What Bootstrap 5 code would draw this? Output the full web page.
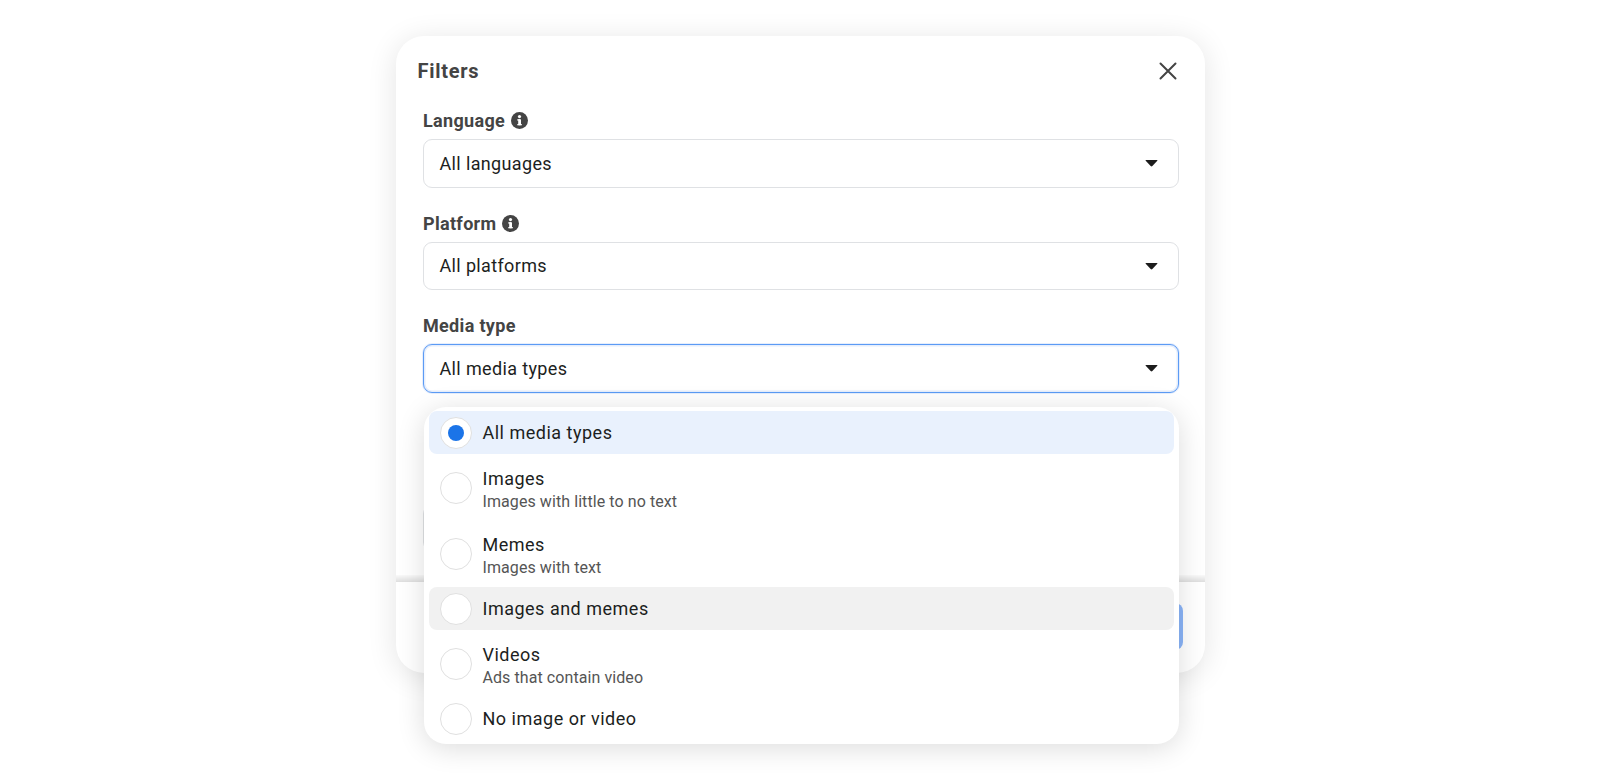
<!DOCTYPE html>
<html lang="en">
<head>
<meta charset="utf-8">
<title>Filters</title>
<link rel="stylesheet" href="https://cdn.jsdelivr.net/npm/bootstrap@5.3.0/dist/css/bootstrap.min.css">
<style>
body{background:#fff;font-family:Roboto,"Liberation Sans",sans-serif;color:#1c1e21;height:780px;overflow:hidden}
.flt-stage{padding-top:36px}
.flt-modal{width:809px;height:637px;background:#fff;border-radius:28px;box-shadow:0 4px 30px rgba(0,0,0,.11);position:relative}
.flt-head{height:70px;padding:0 26px 0 22px}
.flt-title{font-size:20px;font-weight:700;color:#444;margin:0;letter-spacing:.7px}
.flt-close{width:22px;height:22px;background:none;border:0;padding:0;line-height:0;color:#444}
.flt-body{padding:0 26px 0 27.5px;height:469px;overflow:hidden}
.flt-group{height:102.5px}
.flt-label{font-size:18px;font-weight:700;color:#444;height:33px;margin:0;line-height:29.5px;letter-spacing:.32px}
.flt-info{margin-left:6px;vertical-align:-2px}
.flt-select{height:48.5px;border:1px solid #dfe1e4;border-radius:9px;padding:0 20px 0 15.5px;font-size:18px;letter-spacing:.36px;color:#1c1e21;background:#fff}
.flt-select.flt-focus{border:1.5px solid #5b9bf5;box-shadow:inset 0 0 0 1.5px #e6eefc,0 0 0 1px #e6eefc}
.flt-hidden-field{height:46px;margin-top:91.5px}
.flt-band{height:7px;background:linear-gradient(#fafafa,#dedede)}
.flt-foot{height:47px;margin-top:21px;padding-right:22px}
.flt-apply{width:110px;height:47px;background:#8ab4f8;border:0;border-radius:8px}
.flt-menu{position:absolute;left:28px;top:371px;width:755px;height:337px;background:#fff;border-radius:22px;padding:4px 5px;box-shadow:0 4px 28px rgba(0,0,0,.14);gap:1px}
.flt-opt{padding:0 12px 0 11px;border-radius:8px;gap:11px;font-size:18px;letter-spacing:.5px;line-height:24px;color:#1c1e21}
.flt-one{height:43px}
.flt-two{height:65px}
.flt-sel{background:#e9f1fd}
.flt-hov{background:#f1f1f1}
.flt-radio{width:32px;height:32px;border-radius:50%;background:#fff;border:1px solid #e0e0e0;flex:none}
.flt-dot{width:16px;height:16px;border-radius:50%;background:#1b74e8}
.flt-sub{font-size:16px;letter-spacing:.08px;color:#555;line-height:22.500px}
.flt-tt{margin-top:5px}
</style>
</head>
<body>
<div class="flt-stage">
<div class="flt-modal mx-auto">
  <div class="flt-head d-flex align-items-center justify-content-between">
    <h5 class="flt-title">Filters</h5>
    <button class="flt-close" type="button" aria-label="Close"><svg width="22" height="22" viewBox="0 0 22 22"><path d="M3.500 3.500l15 15M18.500 3.500l-15 15" stroke="currentColor" stroke-width="2" stroke-linecap="round" fill="none"/></svg></button>
  </div>
  <div class="flt-body">
    <div class="flt-group">
      <div class="flt-label">Language<svg class="flt-info" width="17" height="17" viewBox="0 0 17 17"><circle cx="8.500" cy="8.500" r="8.500" fill="#444"/><rect x="7.200" y="7.200" width="2.800" height="6" rx=".6" fill="#fff"/><rect x="6.300" y="7.200" width="3" height="1.400" fill="#fff"/><rect x="6.300" y="12" width="4.500" height="1.300" fill="#fff"/><circle cx="8.500" cy="4.600" r="1.600" fill="#fff"/></svg></div>
      <div class="flt-select d-flex align-items-center justify-content-between"><span>All languages</span><svg width="13" height="8" viewBox="0 0 14 9"><path d="M1 1.200h12c.6 0 .8.5.5.9L8 8c-.6.6-1.400.6-2 0L.5 2.100C.2 1.700.4 1.200 1 1.200z" fill="#1c1c1c"/></svg></div>
    </div>
    <div class="flt-group">
      <div class="flt-label">Platform<svg class="flt-info" width="17" height="17" viewBox="0 0 17 17"><circle cx="8.500" cy="8.500" r="8.500" fill="#444"/><rect x="7.200" y="7.200" width="2.800" height="6" rx=".6" fill="#fff"/><rect x="6.300" y="7.200" width="3" height="1.400" fill="#fff"/><rect x="6.300" y="12" width="4.500" height="1.300" fill="#fff"/><circle cx="8.500" cy="4.600" r="1.600" fill="#fff"/></svg></div>
      <div class="flt-select d-flex align-items-center justify-content-between"><span>All platforms</span><svg width="13" height="8" viewBox="0 0 14 9"><path d="M1 1.200h12c.6 0 .8.5.5.9L8 8c-.6.6-1.400.6-2 0L.5 2.100C.2 1.700.4 1.200 1 1.200z" fill="#1c1c1c"/></svg></div>
    </div>
    <div class="flt-group">
      <div class="flt-label">Media type</div>
      <div class="flt-select flt-focus d-flex align-items-center justify-content-between"><span>All media types</span><svg width="13" height="8" viewBox="0 0 14 9"><path d="M1 1.200h12c.6 0 .8.5.5.9L8 8c-.6.6-1.400.6-2 0L.5 2.100C.2 1.700.4 1.200 1 1.200z" fill="#1c1c1c"/></svg></div>
    </div>
    <div class="flt-select flt-hidden-field"></div>
  </div>
  <div class="flt-band"></div>
  <div class="flt-foot d-flex justify-content-end">
    <button class="flt-apply" type="button" aria-label="Apply"></button>
  </div>
  <div class="flt-menu d-flex flex-column">
    <div class="flt-opt flt-one flt-sel d-flex align-items-center"><span class="flt-radio d-flex align-items-center justify-content-center"><span class="flt-dot"></span></span><span>All media types</span></div>
    <div class="flt-opt flt-two d-flex align-items-center"><span class="flt-radio"></span><div class="flt-tt"><div>Images</div><div class="flt-sub">Images with little to no text</div></div></div>
    <div class="flt-opt flt-two d-flex align-items-center"><span class="flt-radio"></span><div class="flt-tt"><div>Memes</div><div class="flt-sub">Images with text</div></div></div>
    <div class="flt-opt flt-one flt-hov d-flex align-items-center"><span class="flt-radio"></span><span>Images and memes</span></div>
    <div class="flt-opt flt-two d-flex align-items-center"><span class="flt-radio"></span><div class="flt-tt"><div>Videos</div><div class="flt-sub">Ads that contain video</div></div></div>
    <div class="flt-opt flt-one d-flex align-items-center"><span class="flt-radio"></span><span>No image or video</span></div>
  </div>
</div>
</div>
<script src="https://cdn.jsdelivr.net/npm/bootstrap@5.3.0/dist/js/bootstrap.bundle.min.js"></script>
</body>
</html>
